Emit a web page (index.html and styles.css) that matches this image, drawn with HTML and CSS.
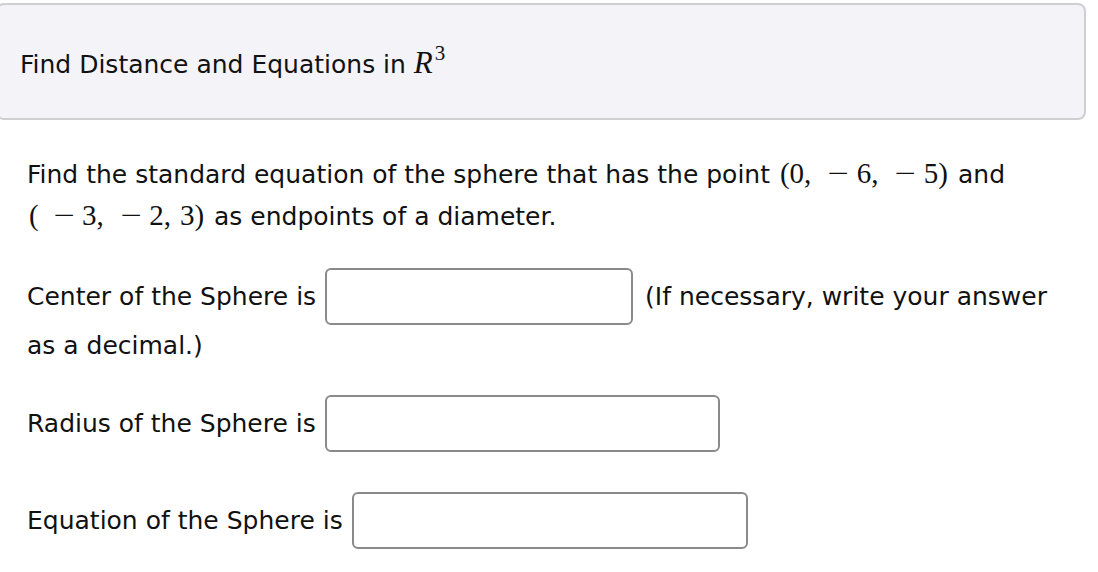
FILE: index.html
```html
<!DOCTYPE html>
<html>
<head>
<meta charset="utf-8">
<link rel="stylesheet" href="styles.css">
</head>
<body>
<div class="header">
  <h3 class="title">Find Distance and Equations in <span class="math mtitle"><i>R</i><sup>3</sup></span></h3>
</div>
<div class="problem">
  <p class="statement">Find the standard equation of the sphere that has the point <span class="math">(0,<span class="op">−</span>6,<span class="op">−</span>5)</span> and<br><span class="math">(<span class="op first">−</span>3,<span class="op">−</span>2,<span class="sp"></span>3)</span> as endpoints of a diameter.</p>
  <div class="answer center-row">
    <span>Center of the Sphere is</span><input class="field f-center" type="text"><span class="note">(If necessary, write your answer</span>
  </div>
  <div class="wrapline">as a decimal.)</div>
  <div class="answer radius-row">
    <span>Radius of the Sphere is</span><input class="field f-radius" type="text">
  </div>
  <div class="answer eq-row">
    <span>Equation of the Sphere is</span><input class="field f-eq" type="text">
  </div>
</div>
</body>
</html>
```
FILE: styles.css
```css
html, body {
  margin: 0;
  padding: 0;
  background: #ffffff;
}
body {
  font-family: "DejaVu Sans", sans-serif;
  color: #111;
  font-size: 25px;
}
.header {
  margin: 3px 12px 0 -4px;
  height: 113px;
  background: #f3f3f8;
  border: 2px solid #cfcfd2;
  border-radius: 8px;
  display: flex;
  align-items: center;
  padding-left: 22px;
}
.title {
  margin: 0;
  font-weight: normal;
  font-size: 25px;
  padding-top: 3px;
}
.math {
  font-family: "Liberation Serif", "DejaVu Serif", serif;
  font-size: 29px;
  margin: 0 2px;
}
.mtitle {
  font-size: 31px;
  margin-left: 0;
}
.math sup {
  font-size: 21px;
  vertical-align: 13px;
  line-height: 0;
  margin-left: 2px;
}
.op {
  display: inline-block;
  margin: 0 10px 0 19px;
  transform: scaleX(1.3);
}
.op.first {
  margin-left: 17px;
}
.sp {
  display: inline-block;
  width: 9px;
}
.problem {
  padding-left: 27px;
}
.statement {
  margin: 0;
  padding-top: 33px;
  line-height: 41px;
}
.answer {
  display: flex;
  align-items: center;
  gap: 9px;
}
.center-row {
  margin-top: 31px;
}
.field {
  box-sizing: border-box;
  border: 2px solid #8a8a8a;
  border-radius: 6px;
  height: 57px;
  background: #fff;
  margin: 0;
  padding: 0;
}
.f-center { width: 308px; }
.f-radius { width: 395px; }
.f-eq { width: 396px; }
.note { margin-left: 3px; }
.wrapline {
  margin-top: 1px;
  line-height: 40px;
}
.radius-row { margin-top: 29px; }
.eq-row { margin-top: 40px; }
```
